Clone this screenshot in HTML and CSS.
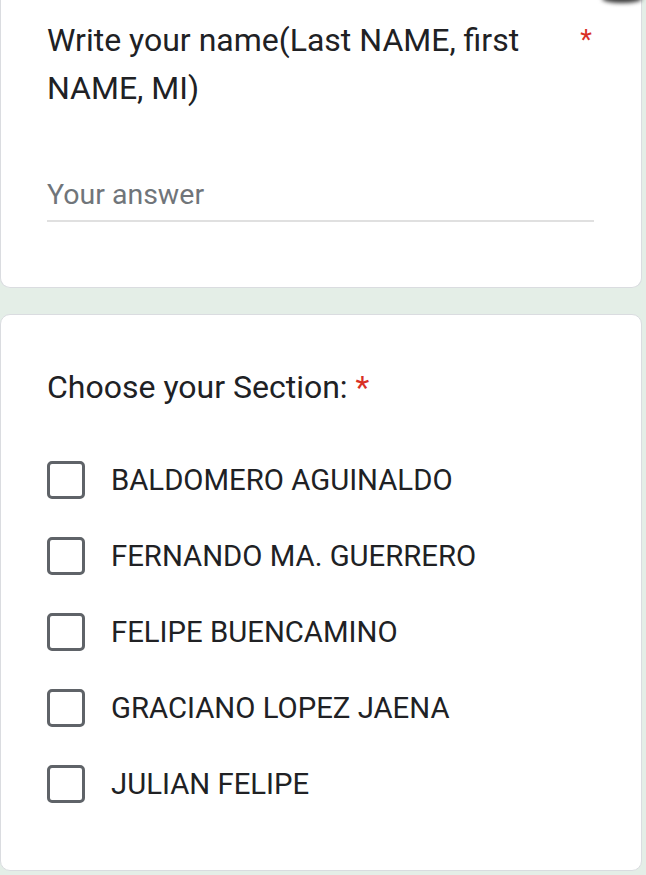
FILE: index.html
```html
<!DOCTYPE html>
<html lang="en">
<head>
	<meta charset="UTF-8">
	<title>Form</title>
	<link rel="stylesheet" href="styles.css">
</head>
<body>
	<div class="corner"></div>
	<div class="form">
		<div class="card card-first">
			<div class="title-row">
				<div class="title">Write your name(Last NAME, first NAME, MI)</div>
				<span class="req">*</span>
			</div>
			<div class="answer">Your answer</div>
		</div>

		<div class="card">
			<div class="title">Choose your Section: <span class="req">*</span></div>
			<ul class="options">
				<li><span class="box"></span><span class="label">BALDOMERO AGUINALDO</span></li>
				<li><span class="box"></span><span class="label">FERNANDO MA. GUERRERO</span></li>
				<li><span class="box"></span><span class="label">FELIPE BUENCAMINO</span></li>
				<li><span class="box"></span><span class="label">GRACIANO LOPEZ JAENA</span></li>
				<li><span class="box"></span><span class="label">JULIAN FELIPE</span></li>
			</ul>
		</div>
	</div>
</body>
</html>
```

FILE: styles.css
```css
body{margin:0;background:#e4eee7;font-family:Roboto,"Noto Sans",sans-serif;color:#202124;}
ul{list-style:none;margin:0;padding:0;}

.corner{position:absolute;right:4px;top:-6px;width:40px;height:9px;border-radius:50%;background:#3a3a3a;filter:blur(2px);}

.form{width:642px;}
.card{background:#fff;border:1px solid #dadce0;border-radius:10px;padding:48px 47px 48px 46px;box-sizing:border-box;}
.card + .card{margin-top:26px;}
.card-first{border-top:0;border-top-left-radius:0;border-top-right-radius:0;padding-top:16px;padding-bottom:65px;}

.title-row{display:flex;align-items:flex-start;}
.title{font-size:32px;line-height:48px;}
.title-row .title{flex:1;padding-right:40px;}
.req{color:#d93025;}
.title-row .req{font-size:27px;line-height:48px;margin-right:2px;}

.answer{margin-top:67px;font-size:28.5px;line-height:32px;color:#70757a;padding-bottom:9px;border-bottom:2px solid #e0e0e0;}

.options{margin-top:31px;}
.options li{display:flex;align-items:center;height:76px;}
.options .box{width:38px;height:38px;box-sizing:border-box;border:3px solid #5f6368;border-radius:5px;margin-right:26px;}
.options .label{font-size:29.3px;}
```
